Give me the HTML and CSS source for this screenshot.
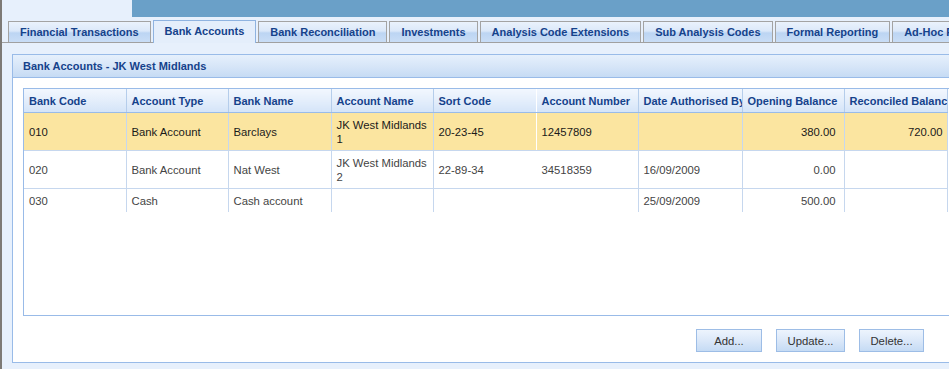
FILE: index.html
```html
<!DOCTYPE html>
<html lang="en">
<head>
  <meta charset="UTF-8" />
  <title>Bank Accounts</title>
  <link rel="stylesheet" href="styles.css">
</head>
<body>

<div class="topbar">
  <div class="topbar-gap"></div>
  <div class="topbar-fill"></div>
</div>

<div class="tabs">
  <div class="tab">Financial Transactions</div>
  <div class="tab active">Bank Accounts</div>
  <div class="tab">Bank Reconciliation</div>
  <div class="tab">Investments</div>
  <div class="tab">Analysis Code Extensions</div>
  <div class="tab">Sub Analysis Codes</div>
  <div class="tab">Formal Reporting</div>
  <div class="tab">Ad-Hoc Reporting</div>
</div>

<div class="panel">
  <div class="panel-header">Bank Accounts - JK West Midlands</div>
  <div class="panel-body">
    <div class="grid">
      <table>
        <colgroup>
          <col class="c102"><col class="c102"><col class="c103"><col class="c102"><col class="c103">
          <col class="c102"><col class="c104"><col class="c102"><col class="c103">
        </colgroup>
        <thead>
          <tr>
            <th>Bank Code</th>
            <th>Account Type</th>
            <th>Bank Name</th>
            <th>Account Name</th>
            <th class="no-line">Sort Code</th>
            <th>Account Number</th>
            <th>Date Authorised By</th>
            <th>Opening Balance</th>
            <th>Reconciled Balance</th>
          </tr>
        </thead>
        <tbody>
          <tr class="selected">
            <td>010</td>
            <td>Bank Account</td>
            <td>Barclays</td>
            <td class="wrap">JK West Midlands 1</td>
            <td class="no-line">20-23-45</td>
            <td>12457809</td>
            <td></td>
            <td class="num">380.00</td>
            <td class="num last-num">720.00</td>
          </tr>
          <tr>
            <td>020</td>
            <td>Bank Account</td>
            <td>Nat West</td>
            <td class="wrap">JK West Midlands 2</td>
            <td class="no-line">22-89-34</td>
            <td>34518359</td>
            <td>16/09/2009</td>
            <td class="num">0.00</td>
            <td class="num last-num"></td>
          </tr>
          <tr class="last">
            <td>030</td>
            <td>Cash</td>
            <td>Cash account</td>
            <td></td>
            <td class="no-line"></td>
            <td></td>
            <td>25/09/2009</td>
            <td class="num">500.00</td>
            <td class="num last-num"></td>
          </tr>
        </tbody>
      </table>
    </div>

    <div class="actions">
      <button class="btn-add">Add...</button>
      <button class="btn-update">Update...</button>
      <button class="btn-delete">Delete...</button>
    </div>
  </div>
</div>

</body>
</html>
```

FILE: styles.css
```css
html, body {
  margin: 0;
  height: 369px;
  overflow: hidden;
}

body {
  font-family: 'Liberation Sans', Arial, sans-serif;
  font-size: 11.3px;
  background: #e7f0fc;
  border-left: 2px solid #7d7a76;
  box-sizing: border-box;
}

.topbar {
  display: flex;
  height: 17px;
}

.topbar-gap {
  width: 130px;
}

.topbar-fill {
  flex: 1;
  background: #6aa0c8;
}

/* tab strip */
.tabs {
  display: flex;
  align-items: flex-end;
  gap: 2px;
  height: 25px;
  padding-left: 6px;
  border-bottom: 1px solid #a0a0a0;
  white-space: nowrap;
}

.tab {
  flex: none;
  height: 20px;
  line-height: 20px;
  padding: 0 11px;
  border: 1px solid #a3a3a3;
  border-bottom: none;
  background: linear-gradient(#eaf2fc 0%, #dbe8f9 45%, #bcd5f3 55%, #c9ddf6 100%);
  color: #15428b;
  font-size: 11px;
  font-weight: bold;
}

.tab.active {
  height: 22px;
  line-height: 21px;
  margin-bottom: -1px;
  border-color: #8fb3e0;
  background: #e4eefb;
}

/* panel */
.panel {
  margin: 11px 0 0 10px;
  width: 960px;
  border: 1px solid #99bbe8;
  border-right: none;
}

.panel-header {
  height: 22px;
  line-height: 22px;
  padding-left: 10px;
  border-bottom: 1px solid #99bbe8;
  background: linear-gradient(#e6f0fc, #d7e6f8 50%, #c6dbf4);
  color: #15428b;
  font-size: 11px;
  font-weight: bold;
}

.panel-body {
  background: #fff;
  padding: 10px 0 0 10px;
  height: 274px;
}

/* grid */
.grid {
  height: 226px;
  border: 1px solid #99bbe8;
  border-right: none;
  background: #fff;
  overflow: hidden;
}

table {
  border-collapse: collapse;
  table-layout: fixed;
  width: 923px;
}

.c102 { width: 102px; }
.c103 { width: 103px; }
.c104 { width: 104px; }

th, td {
  padding: 0 5px;
  text-align: left;
  white-space: nowrap;
  overflow: hidden;
}

th {
  height: 23px;
  border-right: 1px solid #b5cdeb;
  border-bottom: 1px solid #99bbe8;
  background: linear-gradient(#f2f7fe, #e4eefb 50%, #d4e4f8);
  color: #15428b;
  font-size: 11px;
  font-weight: bold;
}

td {
  height: 37px;
  border-right: 1px solid #c6d7ee;
  border-bottom: 1px solid #c6d7ee;
  color: #444;
}

th.no-line, td.no-line {
  border-right-color: transparent;
}

td.wrap {
  white-space: normal;
  line-height: 14px;
}

td.num {
  text-align: right;
  padding-right: 8px;
}

td.last-num {
  padding-right: 4px;
}

tr.selected td {
  background: #fbe5a0;
  color: #1a1a1a;
}

tr.last td {
  height: 23px;
  border-bottom: none;
}

/* buttons */
.actions {
  display: flex;
  gap: 14px;
  margin-top: 13px;
  padding-left: 673px;
}

.actions button {
  height: 23px;
  padding: 0;
  border: 1px solid #9dbde6;
  background: linear-gradient(#edf4fd, #dbe8f9 50%, #c5dbf4);
  color: #333;
  font-family: 'Liberation Sans', Arial, sans-serif;
  font-size: 11.3px;
}

.btn-add { width: 66px; }
.btn-update { width: 69px; }
.btn-delete { width: 65px; }
```
